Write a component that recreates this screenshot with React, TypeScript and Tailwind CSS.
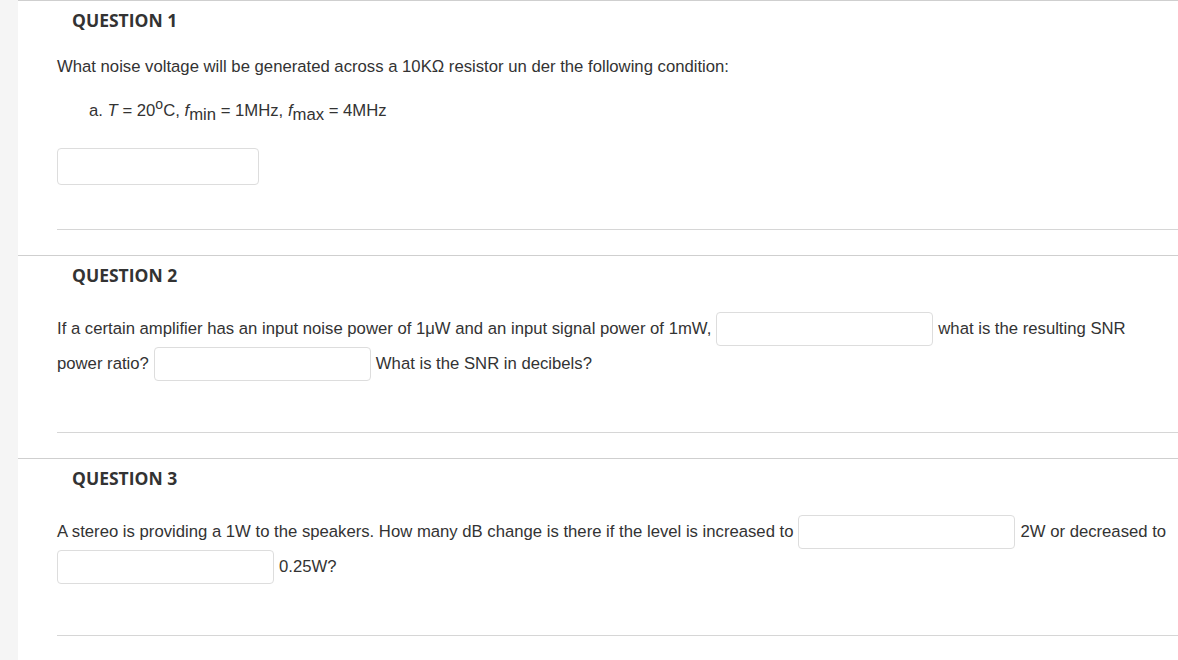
const Blank = ({ w = 'w-[217px]', h = 'h-[34px]' }: { w?: string; h?: string }) => (
  <input
    type="text"
    className={`${w} ${h} shrink-0 rounded-[4px] border border-[#dddddd] bg-white outline-none`}
  />
);

const Question = ({ n, children }: { n: number; children: React.ReactNode }) => (
  <div className="border-t border-[#cfcfcf] pb-[25px]">
    <div className="flex h-[39px] items-center pl-[54px]">
      <h3 className="font-['Open_Sans',sans-serif] text-[17.5px] font-bold text-[#333]">QUESTION {n}</h3>
    </div>
    <div className="pl-[39px] font-['Liberation_Sans',Arial,sans-serif] text-[16.7px] text-[#333]">
      {children}
      <div className="border-t border-[#d6d6d6]"></div>
    </div>
  </div>
);

const Line = ({ children }: { children: React.ReactNode }) => (
  <div className="flex h-[35px] items-center gap-[5px] whitespace-nowrap">{children}</div>
);

export default function App() {
  return (
    <div className="flex min-h-screen bg-white">
      <div className="w-[18px] shrink-0 bg-[#f5f5f5]"></div>
      <div className="flex-1">
        <Question n={1}>
          <p className="mt-4 pt-px leading-5">
            What noise voltage will be generated across a 10KΩ resistor un der the following condition:
          </p>
          <p className="mt-6 pl-8 leading-5">
            a. <i>T</i> = 20<sup className="text-[14px]">o</sup>C, <i>f</i>
            <sub className="text-[16.7px]">min</sub> = 1MHz, <i>f</i>
            <sub className="text-[16.7px]">max</sub> = 4MHz
          </p>
          <div className="mt-[27px]">
            <Blank w="w-[202px]" h="h-[37px]" />
          </div>
          <div className="mt-[44px]"></div>
        </Question>

        <Question n={2}>
          <div className="mt-4">
            <Line>
              <span>If a certain amplifier has an input noise power of 1μW and an input signal power of 1mW,</span>
              <Blank />
              <span>what is the resulting SNR</span>
            </Line>
            <Line>
              <span>power ratio?</span>
              <Blank />
              <span>What is the SNR in decibels?</span>
            </Line>
          </div>
          <div className="mt-[51px]"></div>
        </Question>

        <Question n={3}>
          <div className="mt-4">
            <Line>
              <span>A stereo is providing a 1W to the speakers. How many dB change is there if the level is increased to</span>
              <Blank />
              <span>2W or decreased to</span>
            </Line>
            <Line>
              <Blank />
              <span>0.25W?</span>
            </Line>
          </div>
          <div className="mt-[51px]"></div>
        </Question>
      </div>
    </div>
  );
}
